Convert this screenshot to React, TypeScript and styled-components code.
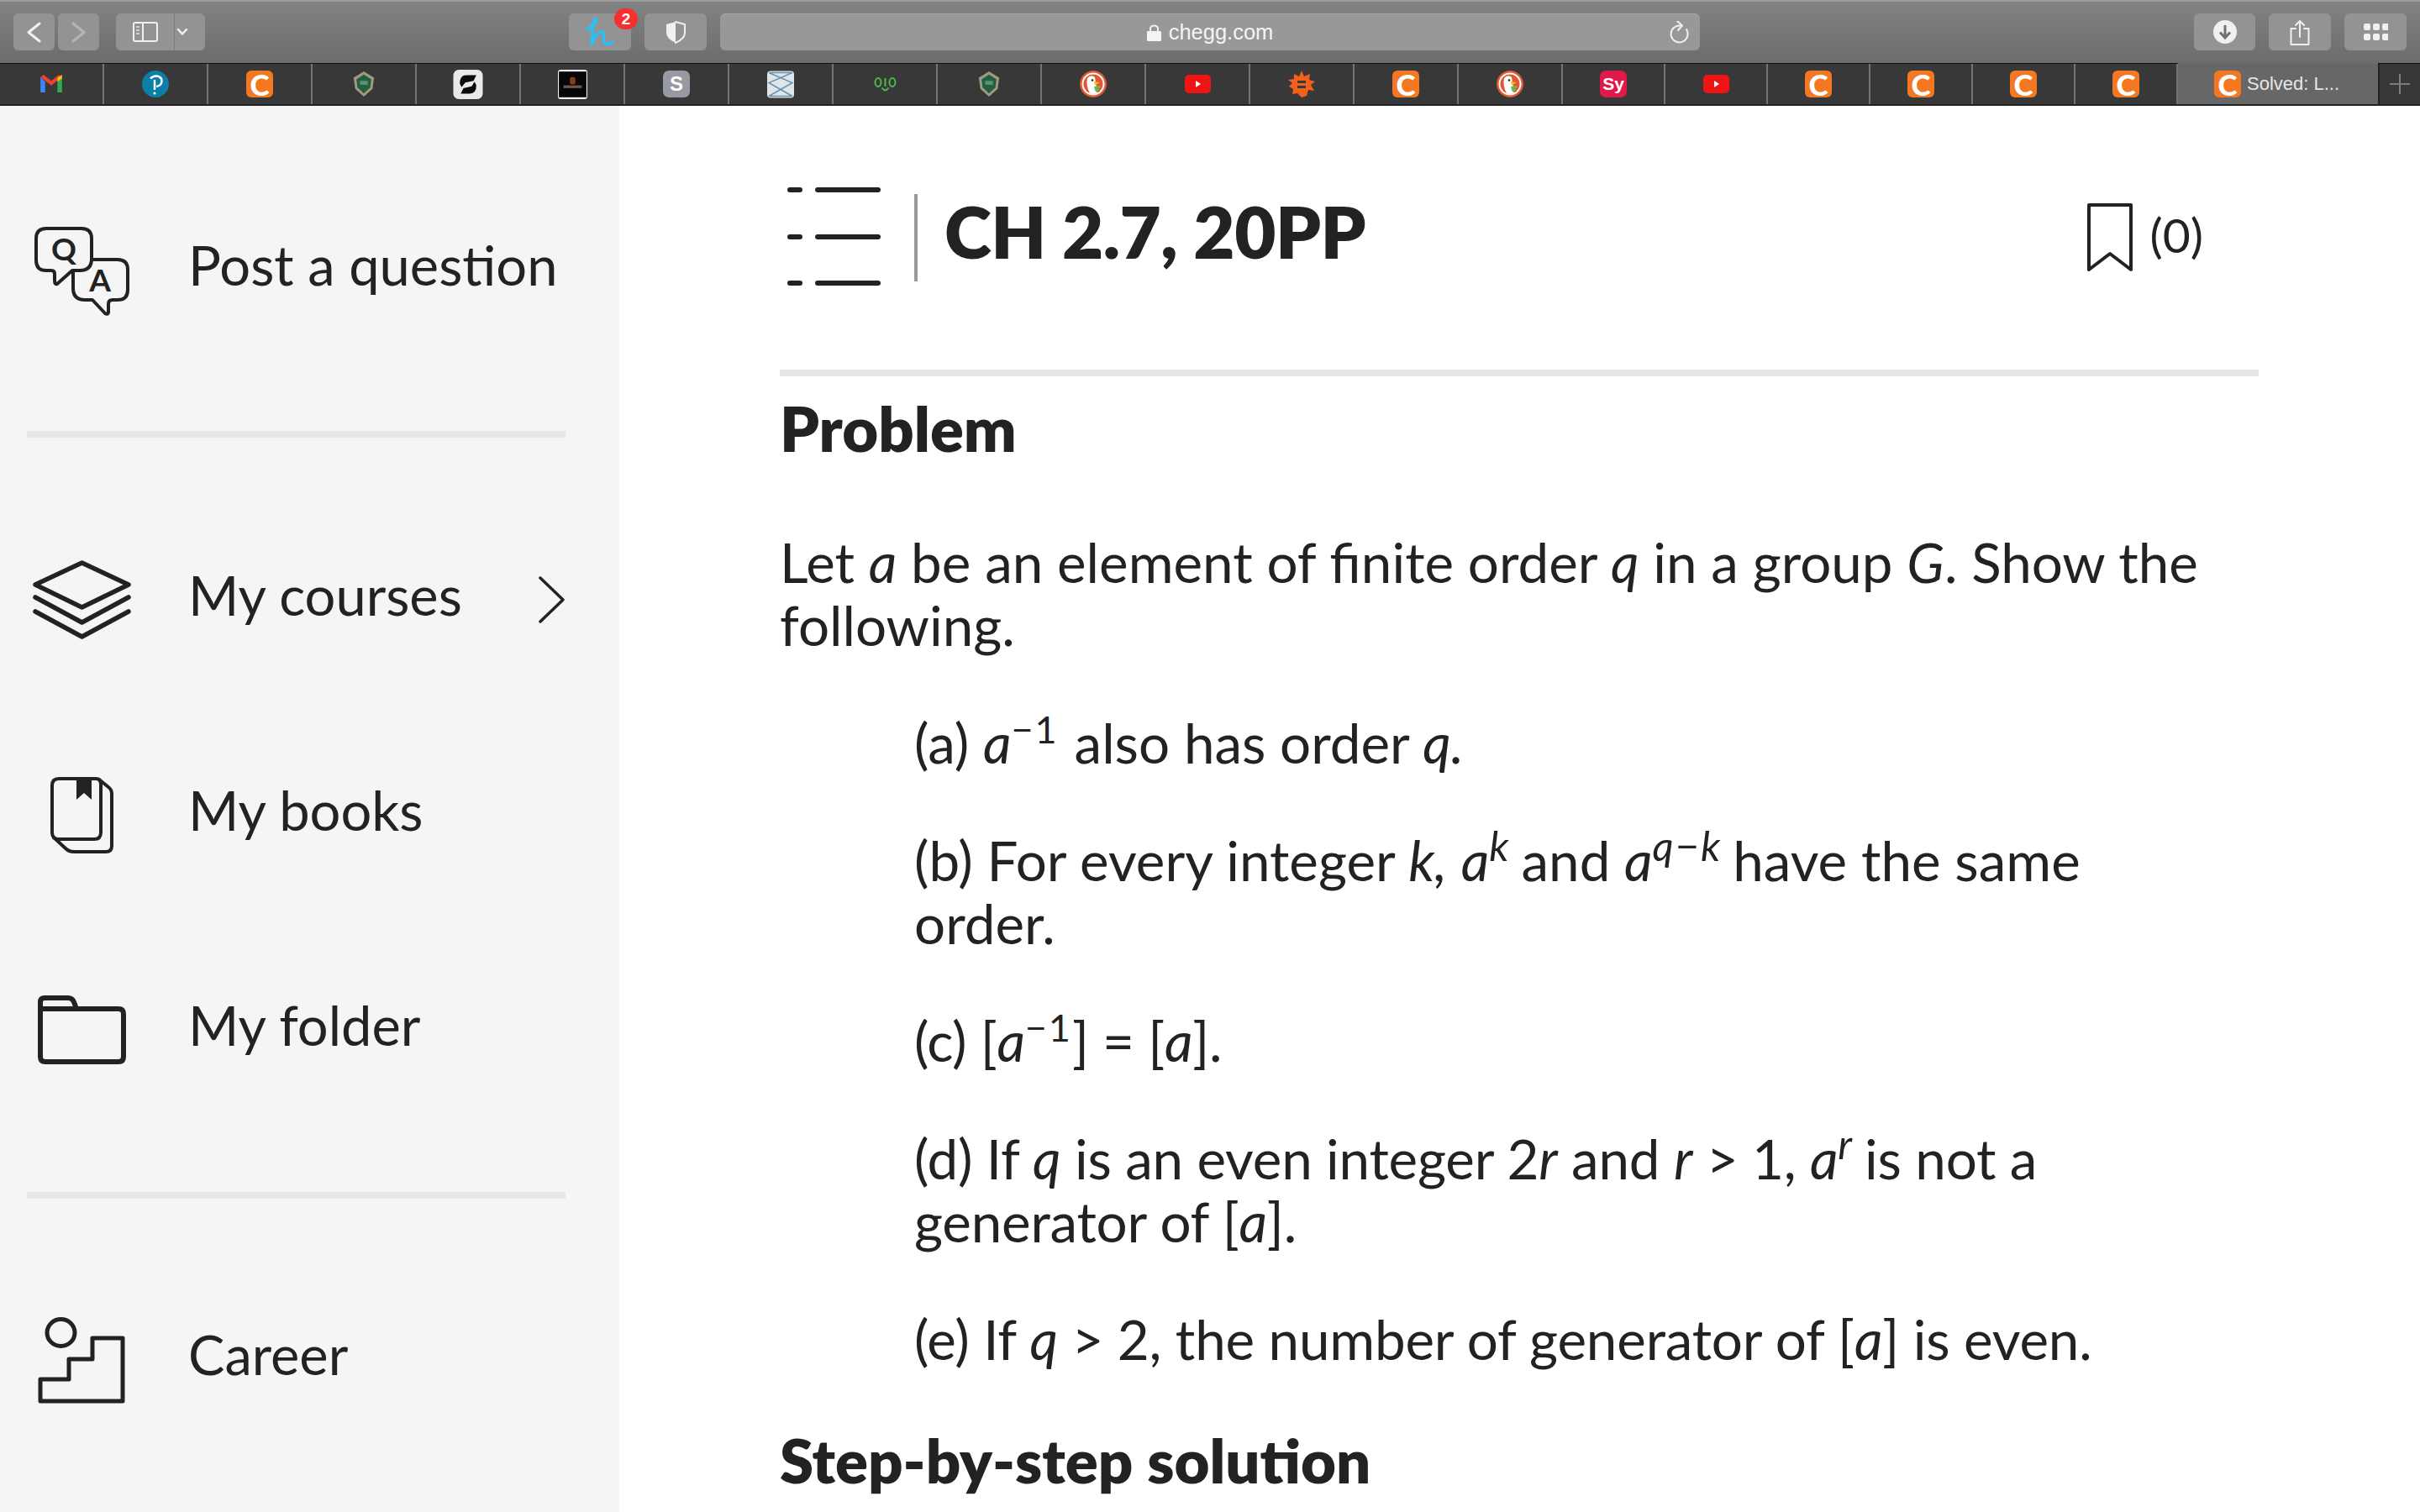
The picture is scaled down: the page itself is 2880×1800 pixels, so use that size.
import React from 'react';
import styled, { createGlobalStyle } from 'styled-components';

const GlobalStyle = createGlobalStyle`
  html, body {
    margin: 0;
    padding: 0;
    width: 2880px;
    height: 1800px;
    overflow: hidden;
    background: #fff;
  }
  * { box-sizing: border-box; }
`;

const Page = styled.div`
  width: 2880px;
  height: 1800px;
  display: flex;
  flex-direction: column;
  overflow: hidden;
  font-family: Lato, 'Liberation Sans', sans-serif;
  color: #222;
`;

/* ---------- browser chrome ---------- */

const Toolbar = styled.div`
  height: 75px;
  display: flex;
  align-items: flex-start;
  padding: 14px 16px 0;
  background: linear-gradient(#828282, #6c6c6c);
  border-top: 2px solid #9c9c9c;
`;

const ToolButton = styled.div<{ $w: number; $ml?: number }>`
  position: relative;
  width: ${(p) => p.$w}px;
  height: 44px;
  margin-left: ${(p) => p.$ml ?? 0}px;
  display: flex;
  align-items: center;
  justify-content: center;
  background: #939393;
  border-radius: 6px;
  flex-shrink: 0;
`;

const SplitDivider = styled.div`
  position: absolute;
  left: 69px;
  top: 0;
  bottom: 0;
  width: 1px;
  background: #7c7c7c;
`;

const CaretSpacer = styled.span`
  width: 22px;
`;

const Badge = styled.div`
  position: absolute;
  top: -6px;
  right: -8px;
  width: 28px;
  height: 25px;
  border-radius: 13px;
  background: #f7302f;
  color: #fff;
  font: 700 19px/25px 'Liberation Sans', sans-serif;
  text-align: center;
`;

const AddressBar = styled.div`
  position: relative;
  width: 1166px;
  height: 44px;
  margin-left: 16px;
  display: flex;
  align-items: center;
  justify-content: center;
  gap: 9px;
  background: #989898;
  border-top: 1px solid #a9a9a9;
  border-radius: 6px;
  flex-shrink: 0;
  color: #f4f4f4;
  font: 400 25.5px 'Liberation Sans', sans-serif;
`;

const Reload = styled.div`
  position: absolute;
  right: 13px;
  top: 8px;
  display: flex;
`;

const TabStrip = styled.div`
  height: 51px;
  display: flex;
  background: #383838;
  border-top: 1px solid #111;
  border-bottom: 2px solid #222;
`;

const Tab = styled.div<{ $w: number }>`
  width: ${(p) => p.$w}px;
  flex-shrink: 0;
  display: flex;
  align-items: center;
  justify-content: center;
  border-right: 2px solid #737373;
`;

const ActiveTab = styled.div`
  width: 238px;
  flex-shrink: 0;
  margin-top: -1px;
  display: flex;
  align-items: center;
  padding-left: 43px;
  gap: 7px;
  background: #676767;
  color: #e6e6e6;
  font: 400 22px 'Liberation Sans', sans-serif;
`;

const NewTab = styled.div`
  width: 50px;
  flex-shrink: 0;
  display: flex;
  align-items: center;
  justify-content: center;
  border-left: 2px solid #222;
`;

const CheggIcon = styled.div`
  width: 32px;
  height: 32px;
  border-radius: 6px;
  background: #f47721;
  color: #fff;
  font: 900 35px/32px Lato, sans-serif;
  text-align: center;
`;

const LetterIcon = styled.div<{ $bg: string; $size?: number }>`
  width: 32px;
  height: 32px;
  border-radius: 7px;
  background: ${(p) => p.$bg};
  color: #fff;
  font: 700 ${(p) => p.$size ?? 24}px/32px 'Liberation Sans', sans-serif;
  text-align: center;
`;

/* ---------- page body ---------- */

const Body = styled.div`
  flex: 1;
  display: flex;
  min-height: 0;
`;

const Sidebar = styled.aside`
  width: 737px;
  flex-shrink: 0;
  background: #f5f5f5;
  padding-top: 66px;
  display: flex;
  flex-direction: column;
`;

const NavItem = styled.div`
  height: 256px;
  flex-shrink: 0;
  display: flex;
  align-items: center;
  padding: 0 64px 0 32px;
`;

const IconSlot = styled.div<{ $shift?: number }>`
  width: 130px;
  flex-shrink: 0;
  display: flex;
  justify-content: center;
  margin-top: ${(p) => p.$shift ?? 0}px;
`;

const NavLabel = styled.span<{ $lift?: number }>`
  margin: ${(p) => -(p.$lift ?? 12)}px 0 0 62px;
  font-size: 65px;
  line-height: 80px;
  color: #222;
`;

const Chevron = styled.svg`
  margin-left: auto;
  flex-shrink: 0;
`;

const NavRule = styled.div`
  height: 8px;
  flex-shrink: 0;
  margin: 65px 64px 65px 32px;
  background: #e7e7e7;
`;

const Main = styled.main`
  flex: 1;
  padding-left: 191px;
  background: #fff;
`;

const Column = styled.div`
  width: 1760px;
`;

const Header = styled.header`
  height: 314px;
  display: flex;
  align-items: center;
  padding: 0 66px 0 9px;
`;

const HeaderRule = styled.div`
  width: 2px;
  height: 104px;
  margin-left: 40px;
  border-left: 4px solid #999;
`;

const Title = styled.h1`
  margin: -16px 0 0 32px;
  font-size: 85px;
  font-weight: 800;
  letter-spacing: -0.5px;
  line-height: 100px;
  color: #222;
`;

const Saved = styled.div`
  margin-left: auto;
  display: flex;
  align-items: center;
  gap: 21px;
  font-size: 57px;
  line-height: 64px;
`;

const SavedCount = styled.span`
  margin-top: -8px;
`;

const Rule = styled.div`
  height: 8px;
  background: #e7e7e7;
`;

const SectionTitle = styled.h2`
  margin: 18px 0 0;
  font-size: 74px;
  font-weight: 800;
  line-height: 88px;
  color: #222;
`;

const Intro = styled.p`
  margin: 77px 0 0;
  font-size: 65.5px;
  line-height: 75px;
`;

const Part = styled.p<{ $track?: number }>`
  width: 1472px;
  margin: 65px 0 0 160px;
  font-size: 65.5px;
  line-height: 75px;
  letter-spacing: ${(p) => p.$track ?? 0}px;
`;

const Sup = styled.sup<{ $size?: number; $gap?: number }>`
  font-size: ${(p) => p.$size ?? 49}px;
  line-height: 0;
  vertical-align: 24px;
  letter-spacing: 2px;
  margin-right: ${(p) => p.$gap ?? 13}px;
`;

const StepTitle = styled(SectionTitle)`
  margin-top: 63px;
  font-size: 72.4px;
`;

/* ---------- drawn icons ---------- */

const Stroke = { fill: 'none', stroke: '#222', strokeLinejoin: 'round', strokeLinecap: 'round' } as const;

const QaIcon = () => (
  <svg width="113" height="106" viewBox="0 0 113 106">
    <g {...Stroke} strokeWidth="4">
      <path d="M14 2H56Q68 2 68 14V38Q68 52 54 52H45L27 68Q24 69 24 64V56Q24 52 20 52H14Q2 52 2 40V14Q2 2 14 2Z" />
      <path d="M70 39H99Q111 39 111 51V75Q111 87 99 87H93Q88 87 88 92V102Q87 105 84 103L69 87H60Q46 87 46 73V54" />
    </g>
    <text x="35" y="40" textAnchor="middle" fontFamily="Lato" fontWeight="700" fontSize="37" fill="#222">Q</text>
    <text x="78" y="77" textAnchor="middle" fontFamily="Lato" fontWeight="700" fontSize="37" fill="#222">A</text>
  </svg>
);

const LayersIcon = () => (
  <svg width="117" height="94" viewBox="0 0 117 94">
    <g {...Stroke} strokeWidth="5.5">
      <path d="M58.5 3L114 29L58.5 56L3 29Z" />
      <path d="M3 44L58.5 74L114 44" />
      <path d="M3 61L58.5 91L114 61" />
    </g>
  </svg>
);

const BooksIcon = () => (
  <svg width="75" height="91" viewBox="0 0 75 91">
    <g {...Stroke} strokeWidth="4">
      <path d="M10 2H54Q60 2 60 9V66Q60 74 52 74H10Q2 74 2 66V10Q2 2 10 2Z" />
      <path d="M58 3L69 12Q73 15 73 20V82Q73 89 66 89H28Q22 89 18 85L4 72" />
    </g>
    <path d="M31 0H49V27L40 19L31 27Z" fill="#222" />
  </svg>
);

const FolderIcon = () => (
  <svg width="105" height="82" viewBox="0 0 105 82">
    <path
      {...Stroke}
      strokeWidth="6"
      d="M3 16V8Q3 3 8 3H36Q41 3 43 8L46 16H96Q102 16 102 22V73Q102 79 96 79H9Q3 79 3 73V16H46"
    />
  </svg>
);

const CareerIcon = () => (
  <svg width="104" height="103" viewBox="0 0 104 103">
    <g {...Stroke} strokeWidth="5">
      <ellipse cx="27.5" cy="18.5" rx="16.5" ry="16" />
      <path d="M65 25H101V100H3V74H37V50H65Z" />
    </g>
  </svg>
);

const ListIcon = () => (
  <svg width="111" height="120" viewBox="0 0 111 120" fill="#222">
    <rect x="0" y="0" width="18" height="6" rx="3" />
    <rect x="33" y="0" width="78" height="6" rx="3" />
    <rect x="0" y="56" width="18" height="6" rx="3" />
    <rect x="33" y="56" width="78" height="6" rx="3" />
    <rect x="0" y="111" width="18" height="6" rx="3" />
    <rect x="33" y="111" width="78" height="6" rx="3" />
  </svg>
);

const BookmarkIcon = () => (
  <svg width="54" height="82" viewBox="0 0 54 82">
    <path {...Stroke} strokeWidth="4" d="M2 2H52V79L27 60L2 79Z" />
  </svg>
);

/* browser glyphs */

const Light = { fill: 'none', stroke: '#f0f0f0', strokeLinejoin: 'round', strokeLinecap: 'round' } as const;

const BackIcon = ({ dim }: { dim?: boolean }) => (
  <svg width="17" height="25" viewBox="0 0 17 25">
    <path
      fill="none"
      stroke={dim ? '#b5b5b5' : '#f0f0f0'}
      strokeWidth="3"
      strokeLinecap="round"
      strokeLinejoin="round"
      d={dim ? 'M2 2L15 12.5L2 23' : 'M15 2L2 12.5L15 23'}
    />
  </svg>
);

const SidebarGlyph = () => (
  <svg width="30" height="24" viewBox="0 0 30 24">
    <rect x="1" y="1" width="28" height="22" rx="2" {...Light} strokeWidth="2" />
    <path d="M12 1V23" {...Light} strokeWidth="2" />
    <path d="M4 6H8M4 10H8M4 14H8" stroke="#d0d0d0" strokeWidth="2" />
  </svg>
);

const CaretGlyph = () => (
  <svg width="14" height="8" viewBox="0 0 14 8">
    <path d="M2 1L7 6.5L12 1" {...Light} strokeWidth="2.5" />
  </svg>
);

const HoneyGlyph = () => (
  <svg width="34" height="34" viewBox="0 0 34 34">
    <path
      d="M2 14C7 10 15 4 12 1.500C9 0 8 15 7 32C10 24 14 17 19 17C24 17 20 25 22 29C24 33 29 32 32 29"
      fill="none"
      stroke="#27c0f7"
      strokeWidth="3.500"
      strokeLinecap="round"
      strokeLinejoin="round"
    />
  </svg>
);

const ShieldGlyph = () => (
  <svg width="26" height="27" viewBox="0 0 26 27">
    <path d="M13 1L2 4V14Q2 21 13 26Z" fill="#f0f0f0" />
    <path d="M13 1L24 4V14Q24 21 13 26" {...Light} strokeWidth="2" />
  </svg>
);

const LockGlyph = () => (
  <svg width="17" height="20" viewBox="0 0 17 20">
    <rect x="0" y="8" width="17" height="12" rx="1" fill="#f4f4f4" />
    <path d="M4 9V5.5Q4 1.5 8.5 1.5T13 5.5V9" {...Light} strokeWidth="2" />
  </svg>
);

const ReloadGlyph = () => (
  <svg width="24" height="27" viewBox="0 0 24 27">
    <path d="M14 5.5A10 10 0 1 0 21 10" {...Light} strokeWidth="2" />
    <path d="M10 0L16 5.5L11 11" {...Light} strokeWidth="2" />
  </svg>
);

const DownloadGlyph = () => (
  <svg width="28" height="28" viewBox="0 0 28 28">
    <circle cx="14" cy="14" r="14" fill="#f0f0f0" />
    <path d="M14 6V20M8 14.5L14 21L20 14.5" fill="none" stroke="#707070" strokeWidth="3" />
  </svg>
);

const ShareGlyph = () => (
  <svg width="24" height="31" viewBox="0 0 24 31">
    <path d="M7 11H1.5V30H22.5V11H17" {...Light} strokeWidth="2" />
    <path d="M12 21V2M7 7L12 2L17 7" {...Light} strokeWidth="2" />
  </svg>
);

const GridGlyph = () => (
  <svg width="29" height="20" viewBox="0 0 29 20" fill="#f0f0f0">
    {[0, 11, 22].map((x) =>
      [0, 12].map((y) => <rect key={`${x}-${y}`} x={x} y={y} width="8" height="8" rx="2" />),
    )}
  </svg>
);

/* favicons */

const GmailFav = () => (
  <svg width="28" height="22" viewBox="0 0 30 24">
    <path d="M1 3V23H7V9Z" fill="#3f83f8" />
    <path d="M23 9V23H29V3Z" fill="#34a853" />
    <path d="M1 3L15 14L29 3L25 0L15 8L5 0Z" fill="#ea4335" />
    <path d="M23 4L29 0V5L23 9Z" fill="#fbbc04" />
  </svg>
);

const PearsonFav = () => (
  <svg width="32" height="32" viewBox="0 0 32 32">
    <circle cx="16" cy="16" r="16" fill="#0c7fa8" />
    <path d="M10 9.500Q13 6 18 6.500Q24 8 23.500 13Q23 18 17 19" fill="none" stroke="#fff" strokeWidth="2.500" />
    <path d="M15 11V23" fill="none" stroke="#fff" strokeWidth="2.500" />
    <circle cx="15" cy="27" r="1.600" fill="#fff" />
  </svg>
);

const ShieldFav = () => (
  <svg width="28" height="30" viewBox="0 0 28 32">
    <path d="M14 0L27 8L25 22L14 32L3 22L1 8Z" fill="#a29a80" />
    <path d="M14 4L23.500 10L22 20.500L14 28L6 20.500L4.500 10Z" fill="#23603f" />
    <path d="M9 12H19V17H9Z" fill="#5d8f74" />
  </svg>
);

const BlockFav = () => (
  <svg width="36" height="35" viewBox="0 0 32 32">
    <rect width="32" height="32" rx="6" fill="#e9e9e9" />
    <path d="M7 15Q7 6 14 6H25L22 12L13 14L9 19Z" fill="#0b0b0b" />
    <path d="M25 17Q25 26 18 26H8L11 20L20 18L23 13Z" fill="#0b0b0b" />
  </svg>
);

const DarkFav = () => (
  <svg width="35" height="35" viewBox="0 0 32 32">
    <rect width="32" height="32" rx="3" fill="#f2f2f2" />
    <rect x="1" y="2" width="30" height="28" fill="#070707" />
    <rect x="13" y="8" width="6" height="8" rx="2" fill="#8a3a1c" />
    <rect x="6" y="17" width="20" height="3" fill="#6b5a4a" />
  </svg>
);

const LatticeFav = () => (
  <svg width="32" height="35" viewBox="0 0 32 32">
    <rect width="32" height="32" rx="4" fill="#dfe6ea" />
    <path d="M2 2L30 14L2 30M30 2L2 14L30 30M2 2H30M2 30H30" fill="none" stroke="#6b93ad" strokeWidth="1.500" />
  </svg>
);

const OloFav = () => (
  <svg width="27" height="17" viewBox="0 0 27 17">
    <g fill="none" stroke="#4fb848" strokeWidth="2">
      <ellipse cx="5" cy="6" rx="3.500" ry="5" />
      <path d="M13.500 1V11" />
      <ellipse cx="22" cy="6" rx="3.500" ry="5" />
      <path d="M10 13Q13.500 18 17 13" strokeLinecap="round" />
    </g>
  </svg>
);

const DuckFav = () => (
  <svg width="32" height="32" viewBox="0 0 32 32">
    <circle cx="16" cy="16" r="16" fill="#de5833" />
    <circle cx="16" cy="16" r="13.500" fill="#fff" />
    <circle cx="16" cy="16" r="11.500" fill="#de5833" />
    <path d="M9 9Q14 4 18 8L21 27Q15 29 12 27Q7 18 9 9Z" fill="#fff" />
    <circle cx="15" cy="11.500" r="1.300" fill="#222" />
    <path d="M17 13L24 14.500L18 17Z" fill="#fbbc04" />
    <path d="M17 19L25 18L24 21L20 21L24 23L19 26Z" fill="#65bc46" />
  </svg>
);

const YoutubeFav = () => (
  <svg width="31" height="22" viewBox="0 0 31 22">
    <rect width="31" height="22" rx="5" fill="#f01414" />
    <path d="M13 7L19 11L13 15Z" fill="#fff" />
  </svg>
);

const SunFav = () => (
  <svg width="32" height="32" viewBox="0 0 32 32">
    <path
      d="M16 0L19 7L26 4L25 11L32 13L27 17L31 24L24 23L22 30L16 32L11 27L5 28L6 22L1 19L5 15L0 11L7 10L7 4L13 7Z"
      fill="#f4601c"
    />
    <path d="M11 12H21V15H11ZM11 18H21V21H11Z" fill="#383838" />
  </svg>
);

const tabs = [
  <GmailFav />,
  <PearsonFav />,
  <CheggIcon>C</CheggIcon>,
  <ShieldFav />,
  <BlockFav />,
  <DarkFav />,
  <LetterIcon $bg="#9999a3">S</LetterIcon>,
  <LatticeFav />,
  <OloFav />,
  <ShieldFav />,
  <DuckFav />,
  <YoutubeFav />,
  <SunFav />,
  <CheggIcon>C</CheggIcon>,
  <DuckFav />,
  <LetterIcon $bg="#e2184b" $size={21}>Sy</LetterIcon>,
  <YoutubeFav />,
  <CheggIcon>C</CheggIcon>,
  <CheggIcon>C</CheggIcon>,
  <CheggIcon>C</CheggIcon>,
  <CheggIcon>C</CheggIcon>,
];

const App = (): JSX.Element => (
  <Page>
    <GlobalStyle />
    <Toolbar>
      <ToolButton $w={49}>
        <BackIcon />
      </ToolButton>
      <ToolButton $w={49} $ml={4}>
        <BackIcon dim />
      </ToolButton>
      <ToolButton $w={106} $ml={20}>
        <SplitDivider />
        <SidebarGlyph />
        <CaretSpacer />
        <CaretGlyph />
      </ToolButton>
      <ToolButton $w={74} $ml={433}>
        <HoneyGlyph />
        <Badge>2</Badge>
      </ToolButton>
      <ToolButton $w={74} $ml={16}>
        <ShieldGlyph />
      </ToolButton>
      <AddressBar>
        <LockGlyph />
        chegg.com
        <Reload>
          <ReloadGlyph />
        </Reload>
      </AddressBar>
      <ToolButton $w={73} $ml={588}>
        <DownloadGlyph />
      </ToolButton>
      <ToolButton $w={74} $ml={16}>
        <ShareGlyph />
      </ToolButton>
      <ToolButton $w={74} $ml={16}>
        <GridGlyph />
      </ToolButton>
    </Toolbar>
    <TabStrip>
      {tabs.map((icon, i) => (
        <Tab key={i} $w={i < 15 ? 124 : 122}>
          {icon}
        </Tab>
      ))}
      <ActiveTab>
        <CheggIcon>C</CheggIcon>
        Solved: L...
      </ActiveTab>
      <NewTab>
        <svg width="24" height="24" viewBox="0 0 24 24">
          <path d="M12 0V24M0 12H24" stroke="#7c7c7c" strokeWidth="2" />
        </svg>
      </NewTab>
    </TabStrip>
    <Body>
      <Sidebar>
        <NavItem>
          <IconSlot $shift={6}>
            <QaIcon />
          </IconSlot>
          <NavLabel $lift={11}>Post a question</NavLabel>
        </NavItem>
        <NavRule />
        <NavItem>
          <IconSlot>
            <LayersIcon />
          </IconSlot>
          <NavLabel>My courses</NavLabel>
          <Chevron width="32" height="56" viewBox="0 0 32 56">
            <path d="M2 2L29 28L2 54" {...Stroke} strokeWidth="3.500" />
          </Chevron>
        </NavItem>
        <NavItem>
          <IconSlot>
            <BooksIcon />
          </IconSlot>
          <NavLabel>My books</NavLabel>
        </NavItem>
        <NavItem>
          <IconSlot>
            <FolderIcon />
          </IconSlot>
          <NavLabel>My folder</NavLabel>
        </NavItem>
        <NavRule />
        <NavItem>
          <IconSlot $shift={-2}>
            <CareerIcon />
          </IconSlot>
          <NavLabel $lift={16}>Career</NavLabel>
        </NavItem>
      </Sidebar>
      <Main>
        <Column>
          <Header>
            <ListIcon />
            <HeaderRule />
            <Title>CH 2.7, 20PP</Title>
            <Saved>
              <BookmarkIcon />
              <SavedCount>(0)</SavedCount>
            </Saved>
          </Header>
          <Rule />
          <SectionTitle>Problem</SectionTitle>
          <Intro>
            Let <i>a</i> be an element of finite order <i>q</i> in a group <i>G</i>. Show the following.
          </Intro>
          <Part>
            (a) <i>a</i>
            <Sup $size={45} $gap={19}>−1</Sup>also has order <i>q.</i>
          </Part>
          <Part>
            (b) For every integer <i>k,</i> <i>a</i>
            <Sup>
              <i>k</i>
            </Sup>
            and <i>a</i>
            <Sup>
              <i>q</i>−<i>k</i>
            </Sup>
            have the same order.
          </Part>
          <Part $track={-0.3}>
            (c) [<i>a</i>
            <Sup $size={45} $gap={0}>−1</Sup>] = [<i>a</i>].
          </Part>
          <Part $track={-0.2}>
            (d) If <i>q</i> is an even integer 2<i>r</i> and <i>r</i> &gt; 1, <i>a</i>
            <Sup>
              <i>r</i>
            </Sup>
            is not a generator of [<i>a</i>].
          </Part>
          <Part $track={-0.18}>
            (e) If <i>q</i> &gt; 2, the number of generator of [<i>a</i>] is even.
          </Part>
          <StepTitle>Step-by-step solution</StepTitle>
        </Column>
      </Main>
    </Body>
  </Page>
);

export default App;
